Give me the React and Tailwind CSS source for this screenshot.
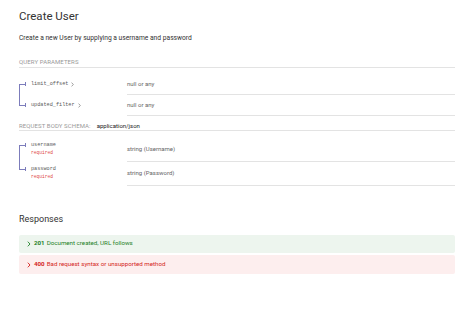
import React from "react";

const LINE = "bg-[#7c7cbb]";

function Bullet() {
  return (
    <span className="flex items-center mr-[5px]">
      <span className={`block w-[6px] h-px ${LINE}`} />
      <span className={`block w-px h-[4px] ${LINE}`} />
    </span>
  );
}

function SmallChevron() {
  return (
    <svg width="3" height="5" viewBox="0 0 3 5" className="ml-[3px]">
      <path d="M0.6 0.6 L2.3 2.5 L0.6 4.4" fill="none" stroke="#777" strokeWidth="0.7" />
    </svg>
  );
}

function ParamRow({ name, value, first, last, nameTop, lineOffset, required, valueCls }) {
  return (
    <div className="flex">
      <div className="relative w-[108px] shrink-0">
        {first && <div className={`absolute left-0 bottom-0 w-px ${LINE}`} style={{ top: lineOffset }} />}
        {last && <div className={`absolute left-0 top-0 w-px ${LINE}`} style={{ height: lineOffset + 1 }} />}
        <div className="flex items-start" style={{ paddingTop: nameTop }}>
          <div className="flex flex-col">
            <div className="flex items-center h-[8px]">
              <Bullet />
              <span className="font-['Liberation_Mono',monospace] text-[5.2px] leading-[8px] text-[#5a5a5a]">{name}</span>
              {!required && <SmallChevron />}
            </div>
            {required && (
              <div className="pl-[12px] font-['Liberation_Mono',monospace] text-[4.6px] leading-[8px] text-[#e04a47]">required</div>
            )}
          </div>
        </div>
      </div>
      <div className={`flex-1 border-b border-[#e3e3e3] text-[6px] leading-[8px] text-[#666] ${valueCls}`}>{value}</div>
    </div>
  );
}

function Chevron({ color }) {
  return (
    <svg width="4" height="6" viewBox="0 0 4 6" className="mr-[3px]">
      <path d="M0.8 0.7 L3 3 L0.8 5.3" fill="none" stroke={color} strokeWidth="0.9" />
    </svg>
  );
}

export default function App() {
  return (
    <div className="w-[474px] h-[327px] overflow-hidden bg-white px-[19px] pt-[9px] font-['Roboto','Liberation_Sans',sans-serif]">
      <div className="text-[11.5px] leading-[14px] text-[#333]">Create User</div>
      <div className="mt-[10px] text-[6.7px] leading-[10px] text-[#333]">
        Create a new User by supplying a username and password
      </div>

      <div className="mt-[15px] pb-[1px] border-b border-[#e3e3e3] text-[6px] leading-[8px] text-[#999] tracking-[0.1px]">
        QUERY PARAMETERS
      </div>
      <ParamRow name="limit_offset" value="null or any" first nameTop={12} lineOffset={16} valueCls="pt-[12px] pb-[6px]" />
      <ParamRow name="updated_filter" value="null or any" last nameTop={6} lineOffset={10} valueCls="pt-[6px] pb-[6px]" />

      <div className="flex items-end pt-[6px] border-b border-[#e3e3e3] text-[6px] leading-[8px]">
        <span className="text-[#999] tracking-[0.1px]">REQUEST BODY SCHEMA:</span>
        <span className="ml-[6px] text-[#222]">application/json</span>
      </div>
      <ParamRow name="username" value="string (Username)" first required nameTop={10} lineOffset={14} valueCls="pt-[14px] pb-[8px]" />
      <ParamRow name="password" value="string (Password)" last required nameTop={3} lineOffset={7} valueCls="pt-[7px] pb-[8px]" />

      <div className="mt-[27px] text-[9px] leading-[12px] text-[#333]">Responses</div>

      <div className="mt-[10px] h-[18px] flex items-center pl-[8px] rounded-[2px] bg-[#edf5ee] text-[6.2px] text-[#1d8127]">
        <Chevron color="#1d8127" />
        <span className="font-bold mr-[2px]">201</span>
        <span>Document created, URL follows</span>
      </div>
      <div className="mt-[2px] h-[19px] flex items-center pl-[8px] rounded-[2px] bg-[#fdeeee] text-[6.2px] text-[#d41f1c]">
        <Chevron color="#d41f1c" />
        <span className="font-bold mr-[2px]">400</span>
        <span>Bad request syntax or unsupported method</span>
      </div>
    </div>
  );
}
